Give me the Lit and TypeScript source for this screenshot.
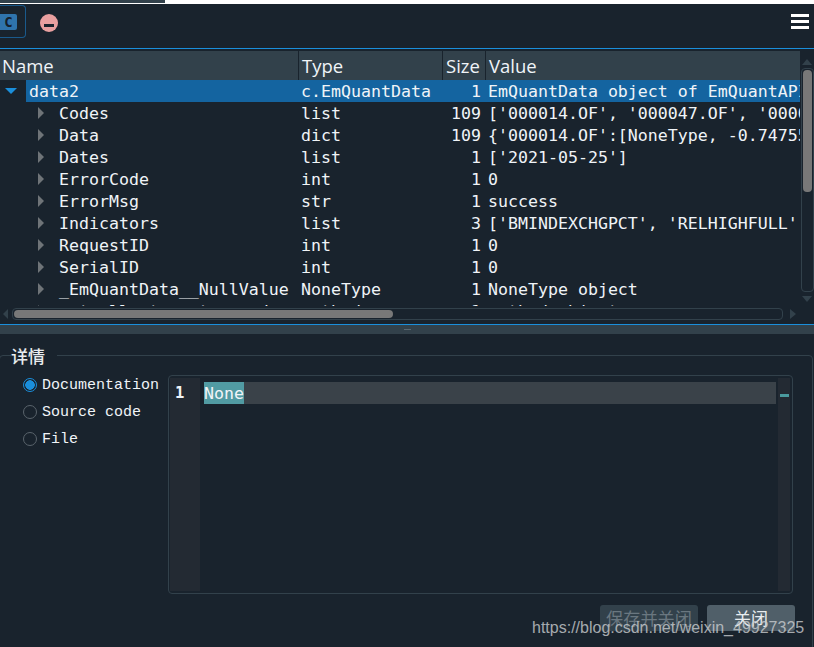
import { LitElement, html, css } from "lit";
import { customElement } from "lit/decorators.js";

const rows: [string, string, string, string][] = [
  ["Codes", "list", "109", "['000014.OF', '000047.OF', '0000"],
  ["Data", "dict", "109", "{'000014.OF':[NoneType, -0.74755"],
  ["Dates", "list", "1", "['2021-05-25']"],
  ["ErrorCode", "int", "1", "0"],
  ["ErrorMsg", "str", "1", "success"],
  ["Indicators", "list", "3", "['BMINDEXCHGPCT', 'RELHIGHFULL'"],
  ["RequestID", "int", "1", "0"],
  ["SerialID", "int", "1", "0"],
  ["_EmQuantData__NullValue", "NoneType", "1", "NoneType object"],
  ["__t__ll__t____t_____d", "method", "1", "method object"],
];

@customElement("app-root")
export class AppRoot extends LitElement {
  static styles = css`
    :host { display: block; width: 814px; height: 647px; background: #19232d; position: relative; overflow: hidden; color: #f0f4f8; font-family: "DejaVu Sans Mono", monospace; }
    .strip { height: 4px; background: #fff; }
    .strip div { width: 165px; height: 3px; background: #32414b; }
    .toolbar { height: 44px; display: flex; align-items: flex-start; justify-content: space-between; padding: 1px 5px 0 0; box-sizing: border-box; }
    .tools { display: flex; align-items: flex-start; gap: 14px; }
    .cbtn { width: 26px; height: 33px; box-sizing: border-box; border: 1px solid #1a5a8c; border-left: 0; border-radius: 0 4px 4px 0; display: flex; align-items: center; }
    .c { width: 17px; height: 16px; background: #2f74ad; border-radius: 0 2px 2px 0; color: #14202c; font: bold 14px/16px "DejaVu Sans Mono", monospace; text-align: center; }
    .icon { margin-top: 8px; }
    .menu { width: 18px; display: flex; flex-direction: column; gap: 3px; margin-top: 9px; }
    .menu i { display: block; height: 3px; background: #fff; }
    .table { border-top: 1px solid #1a8fdc; height: 258px; padding-top: 2px; box-sizing: border-box; display: grid; grid-template-columns: 1fr 14px; }
    .main { min-width: 0; overflow: hidden; }
    .head, .row { display: grid; grid-template-columns: 298px 144px 43px 1fr; }
    .head { height: 29px; background: #32414b; font: 18.5px/29px "Open Sans", sans-serif; color: #f0f4f8; }
    .head div { padding-left: 3px; border-left: 1px solid #19232d; white-space: nowrap; overflow: hidden; }
    .head div:first-child { padding-left: 2px; border: 0; }
    .rows { height: 226px; overflow: hidden; }
    .row { height: 22px; font-size: 16.6px; line-height: 24px; white-space: pre; }
    .row > div { overflow: hidden; }
    .row .name { padding-left: 59px; position: relative; }
    .row .type { padding-left: 3px; }
    .row .size { text-align: right; padding-right: 4px; }
    .row .value { padding-left: 3px; }
    .selected .name { padding-left: 29px; background: linear-gradient(90deg, #19232d 26px, #1464a0 26px); }
    .selected { background: #1464a0; }
    .arrow { position: absolute; left: 38px; top: 5px; width: 0; height: 0; border-left: 6px solid #6f7478; border-top: 6px solid transparent; border-bottom: 6px solid transparent; }
    .arrow.open { left: 5px; top: 8px; border-top: 6px solid #1a8fdc; border-left: 6px solid transparent; border-right: 6px solid transparent; border-bottom: 0; }
    .vbar { display: flex; flex-direction: column; align-items: center; padding-top: 8px; box-sizing: border-box; }
    .up { width: 0; border: 5px solid transparent; border-top: 0; border-bottom: 6px solid #32414b; }
    .down { width: 0; border: 5px solid transparent; border-bottom: 0; border-top: 6px solid #32414b; margin-top: 4px; }
    .vtrack { width: 13px; height: 224px; box-sizing: border-box; border: 1px solid #32414b; border-radius: 4px; margin-top: 3px; padding: 1px 1px; }
    .vthumb { width: 9px; height: 122px; background: #787878; border-radius: 4px; }
    .hbar { height: 18px; display: flex; align-items: flex-start; padding: 2px 0 0 3px; box-sizing: border-box; }
    .left { border: 5px solid transparent; border-left: 0; border-right: 5px solid #32414b; margin-top: 1px; }
    .right { border: 5px solid transparent; border-right: 0; border-left: 6px solid #32414b; margin: 1px 0 0 7px; }
    .htrack { width: 771px; height: 12px; box-sizing: border-box; border: 1px solid #32414b; border-radius: 4px; margin-left: 4px; padding: 1px; }
    .hthumb { width: 379px; height: 8px; background: #787878; border-radius: 4px; }
    .splitter { height: 10px; background: #32414b; border-top: 1px solid #1a8fdc; box-sizing: border-box; display: flex; justify-content: center; padding-top: 4px; }
    .splitter i { display: block; width: 7px; height: 1px; background: #5a6872; }
    .details { height: 313px; position: relative; }
    .group { position: absolute; left: -1px; right: 1px; top: 21px; height: 320px; border: 1px solid #32414b; border-radius: 4px; box-sizing: border-box; }
    .title { position: absolute; left: 11px; top: 11px; padding-right: 12px; background: #19232d; font: 500 17px/22px "Noto Sans CJK SC", sans-serif; color: #e8ecef; }
    .body { position: absolute; left: 23px; top: 41px; right: 21px; display: grid; grid-template-columns: 145px 1fr; }
    .radios { display: flex; flex-direction: column; gap: 7px; font: 15px/18px "Liberation Mono", monospace; }
    .radio { display: flex; align-items: center; gap: 5px; color: #f0f4f8; white-space: nowrap; }
    .radio span:last-child { padding-top: 2px; }
    .dot { width: 14px; height: 14px; box-sizing: border-box; border-radius: 50%; border: 1px solid #5a646c; flex: none; }
    .dot.on { border-color: #1a8fdc; background: radial-gradient(circle, #1a8fdc 4.5px, transparent 5px); }
    .editor { height: 219px; box-sizing: border-box; border: 1px solid #32414b; border-radius: 4px; display: grid; grid-template-columns: 30px 1fr 12px; padding: 2px 2px 2px 1px; }
    .gutter { background: #232a33; font: bold 15.5px/30px "DejaVu Sans Mono", monospace; padding-left: 5px; }
    .text { padding: 4px 2px 0 4px; }
    .line { height: 22px; background: #3a4249; font-size: 16.6px; line-height: 24px; }
    .line span { background: #519ba3; display: block; width: fit-content; height: 22px; }
    .mini { background: #232a33; position: relative; }
    .mini i { position: absolute; left: 2px; top: 16px; width: 9px; height: 3px; background: #4a9a9e; }
    .footer { position: absolute; top: 605px; right: 19px; display: flex; gap: 9px; font: 17px/26px "Noto Sans CJK SC", sans-serif; }
    .btn { height: 26px; border-radius: 3px; text-align: center; box-sizing: border-box; }
    .save { width: 98px; background: #32414b; color: #6a7780; font-size: 17.2px; }
    .close { width: 88px; background: #505f69; color: #e8ecef; }
    .mark { position: absolute; left: 532px; top: 618px; font: 16px/20px "Liberation Sans", Arial, sans-serif; color: #c9cccf; opacity: .8; white-space: nowrap; }
  `;

  render() {
    return html`
      <div class="strip"><div></div></div>
      <div class="toolbar">
        <div class="tools">
          <div class="cbtn"><div class="c">C</div></div>
          <svg class="icon" width="20" height="20" viewBox="0 0 20 20"><circle cx="9" cy="10" r="9" fill="#e9a0a0"/><rect x="4" y="11" width="10" height="3" fill="#19232d"/></svg>
        </div>
        <div class="menu"><i></i><i></i><i></i></div>
      </div>
      <div class="table">
        <div class="main">
          <div class="head"><div>Name</div><div>Type</div><div>Size</div><div>Value</div></div>
          <div class="rows">
            <div class="row selected">
              <div class="name"><span class="arrow open"></span>data2</div>
              <div class="type">c.EmQuantData</div><div class="size">1</div><div class="value">EmQuantData object of EmQuantAPI</div>
            </div>
            ${rows.map(r => html`<div class="row">
              <div class="name"><span class="arrow"></span>${r[0]}</div>
              <div class="type">${r[1]}</div><div class="size">${r[2]}</div><div class="value">${r[3]}</div>
            </div>`)}
          </div>
        </div>
        <div class="vbar"><div class="up"></div><div class="vtrack"><div class="vthumb"></div></div><div class="down"></div></div>
      </div>
      <div class="hbar"><div class="left"></div><div class="htrack"><div class="hthumb"></div></div><div class="right"></div></div>
      <div class="splitter"><i></i></div>
      <div class="details">
        <div class="group"></div>
        <div class="title">详情</div>
        <div class="body">
          <div class="radios">
            <div class="radio"><span class="dot on"></span><span>Documentation</span></div>
            <div class="radio"><span class="dot"></span><span>Source code</span></div>
            <div class="radio"><span class="dot"></span><span>File</span></div>
          </div>
          <div class="editor">
            <div class="gutter">1</div>
            <div class="text"><div class="line"><span>None</span></div></div>
            <div class="mini"><i></i></div>
          </div>
        </div>
      </div>
      <div class="footer"><div class="btn save">保存并关闭</div><div class="btn close">关闭</div></div>
      <div class="mark">https://blog.csdn.net/weixin_49927325</div>
    `;
  }
}
